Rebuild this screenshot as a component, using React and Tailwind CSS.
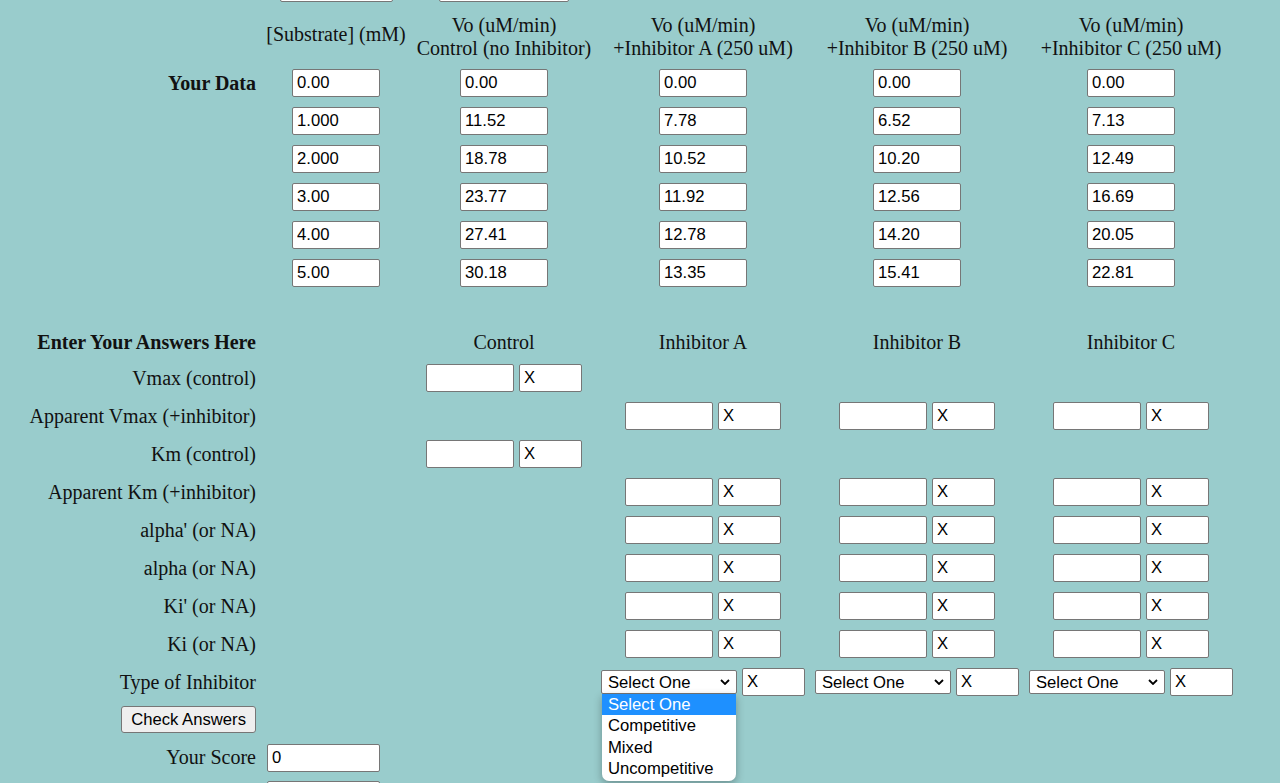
import React from 'react';

const cols = 'grid grid-cols-[262px_148px_188px_210px_218px_210px]';
const serif = "font-['Liberation_Serif','Times_New_Roman',serif]";
const sans = "font-['Liberation_Sans',Arial,sans-serif]";

const substrate = ['0.00', '1.000', '2.000', '3.00', '4.00', '5.00'];
const series = [
  ['0.00', '11.52', '18.78', '23.77', '27.41', '30.18'],
  ['0.00', '7.78', '10.52', '11.92', '12.78', '13.35'],
  ['0.00', '6.52', '10.20', '12.56', '14.20', '15.41'],
  ['0.00', '7.13', '12.49', '16.69', '20.05', '22.81'],
];

const headers = [
  ['Vo (uM/min)', 'Control (no Inhibitor)'],
  ['Vo (uM/min)', '+Inhibitor A (250 uM)'],
  ['Vo (uM/min)', '+Inhibitor B (250 uM)'],
  ['Vo (uM/min)', '+Inhibitor C (250 uM)'],
];

// which answer rows go in the control column vs. the three inhibitor columns
const answers = [
  { label: 'Vmax (control)', control: true },
  { label: 'Apparent Vmax (+inhibitor)' },
  { label: 'Km (control)', control: true },
  { label: 'Apparent Km (+inhibitor)' },
  { label: "alpha' (or NA)" },
  { label: 'alpha (or NA)' },
  { label: "Ki' (or NA)" },
  { label: 'Ki (or NA)' },
];

const Box = ({ value = '', w = 'w-[88px]' }) => (
  <input
    type="text"
    defaultValue={value}
    className={`${w} h-[28px] bg-white border border-[#767676] rounded-[2px] px-[4px] text-[16.67px] text-black ${sans} outline-none`}
  />
);

const Pair = () => (
  <div className="flex items-center justify-center gap-[5px]">
    <Box />
    <Box value="X" w="w-[63px]" />
  </div>
);

const Label = ({ children, bold }) => (
  <div className={`text-right pr-[6px] ${bold ? 'font-bold' : ''}`}>{children}</div>
);

const Chevron = () => (
  <svg width="10" height="6" viewBox="0 0 10 6" className="absolute right-[7px] top-[9px] pointer-events-none">
    <path d="M1 1l4 4 4-4" fill="none" stroke="#000" strokeWidth="1.8" />
  </svg>
);

const TypeSelect = ({ open }) => (
  <div className="flex items-center justify-center gap-[5px]">
    <div className="relative">
      <select
        defaultValue="Select One"
        className={`appearance-none w-[136px] h-[24px] bg-white border border-[#767676] rounded-[2px] pl-[6px] text-[16.67px] leading-[21px] text-black ${sans} outline-none`}
      >
        <option>Select One</option>
        <option>Competitive</option>
        <option>Mixed</option>
        <option>Uncompetitive</option>
      </select>
      <Chevron />
      {open && (
        <ul
          className={`absolute left-[1px] top-[24px] w-[134px] z-10 bg-white rounded-b-[7px] overflow-hidden shadow-[0_3px_8px_rgba(0,0,0,0.3)] text-[16.67px] leading-[21.5px] text-black ${sans}`}
        >
          <li className="bg-[#1e90ff] text-white pl-[6px]">Select One</li>
          <li className="pl-[6px]">Competitive</li>
          <li className="pl-[6px]">Mixed</li>
          <li className="pl-[6px] pb-[1px]">Uncompetitive</li>
        </ul>
      )}
    </div>
    <Box value="X" w="w-[63px]" />
  </div>
);

export default function App() {
  return (
    <div className={`min-h-screen bg-[#99cccc] text-[20px] leading-[23px] text-[#111] ${serif}`}>
      {/* tail of the row above, scrolled mostly out of view */}
      <div className={`${cols} h-[2px] overflow-hidden`}>
        <div />
        <div className="h-[2px] overflow-hidden flex items-end justify-center">
          <div className="shrink-0 w-[113px] h-[28px] bg-white border border-[#767676] rounded-[2px]" />
        </div>
        <div className="h-[2px] overflow-hidden flex items-end justify-center">
          <div className="shrink-0 w-[130px] h-[28px] bg-white border border-[#767676] rounded-[2px]" />
        </div>
      </div>

      {/* data table */}
      <div className={`${cols} h-[62px] items-end pb-[4px]`}>
        <div />
        <div className="self-center pt-[7px] text-center whitespace-nowrap">[Substrate] (mM)</div>
        {headers.map(([a, b]) => (
          <div key={b} className="text-center whitespace-nowrap">
            <div>{a}</div>
            <div>{b}</div>
          </div>
        ))}
      </div>

      {substrate.map((s, i) => (
        <div key={i} className={`${cols} h-[38px] items-center`}>
          {i === 0 ? <Label bold>Your Data</Label> : <div />}
          <div className="flex justify-center"><Box value={s} /></div>
          {series.map((col, j) => (
            <div key={j} className="flex justify-center"><Box value={col[i]} /></div>
          ))}
        </div>
      ))}

      <div className="h-[33px]" />

      {/* answers */}
      <div className={`${cols} h-[34px] items-center`}>
        <Label bold>Enter Your Answers Here</Label>
        <div />
        <div className="text-center">Control</div>
        <div className="text-center">Inhibitor A</div>
        <div className="text-center">Inhibitor B</div>
        <div className="text-center">Inhibitor C</div>
      </div>

      {answers.map((row) => (
        <div key={row.label} className={`${cols} h-[38px] items-center`}>
          <Label>{row.label}</Label>
          <div />
          {row.control ? <Pair /> : <div />}
          {row.control ? null : (
            <>
              <Pair />
              <Pair />
              <Pair />
            </>
          )}
        </div>
      ))}

      <div className={`${cols} h-[38px] items-center`}>
        <Label>Type of Inhibitor</Label>
        <div />
        <div />
        <TypeSelect open />
        <TypeSelect />
        <TypeSelect />
      </div>

      <div className={`${cols} h-[37px] items-center`}>
        <div className="flex justify-end pr-[6px]">
          <button
            type="button"
            className={`h-[27px] px-[9px] bg-[#efefef] border border-[#767676] rounded-[3px] text-[16.67px] text-black ${sans}`}
          >
            Check Answers
          </button>
        </div>
      </div>

      <div className={`${cols} h-[39px] items-center`}>
        <Label>Your Score</Label>
        <div className="pl-[5px]"><Box value="0" w="w-[113px]" /></div>
      </div>

      <div className={`${cols} h-[38px] items-start pt-[4px]`}>
        <div />
        <div className="pl-[5px]"><Box w="w-[113px]" /></div>
      </div>
    </div>
  );
}
